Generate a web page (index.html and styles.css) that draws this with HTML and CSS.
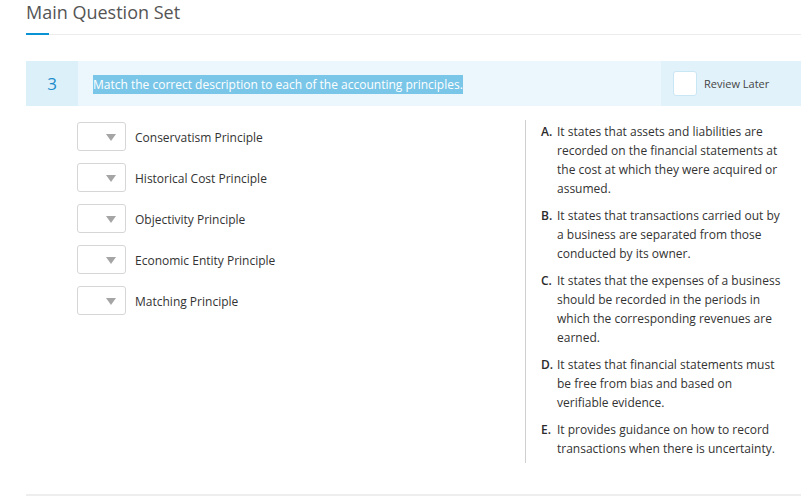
FILE: index.html
```html
<!DOCTYPE html>
<html lang="en">
<head>
    <meta charset="utf-8">
    <title>Main Question Set</title>
    <link rel="stylesheet" href="styles.css">
</head>
<body>
<div class="page">
    <div class="header">
        <h1 class="title">Main Question Set</h1>
        <div class="rule"><span class="rule-accent"></span></div>
    </div>

    <div class="question-bar">
        <div class="q-number">3</div>
        <div class="q-text"><span class="selected">Match the correct description to each of the accounting principles.</span></div>
        <label class="review">
            <span class="review-box"></span>
            <span class="review-label">Review Later</span>
        </label>
    </div>

    <div class="match">
        <div class="terms">
            <div class="term">
                <div class="dropdown"><span class="caret"></span></div>
                <span class="term-label">Conservatism Principle</span>
            </div>
            <div class="term">
                <div class="dropdown"><span class="caret"></span></div>
                <span class="term-label">Historical Cost Principle</span>
            </div>
            <div class="term">
                <div class="dropdown"><span class="caret"></span></div>
                <span class="term-label">Objectivity Principle</span>
            </div>
            <div class="term">
                <div class="dropdown"><span class="caret"></span></div>
                <span class="term-label">Economic Entity Principle</span>
            </div>
            <div class="term">
                <div class="dropdown"><span class="caret"></span></div>
                <span class="term-label">Matching Principle</span>
            </div>
        </div>

        <div class="options">
            <div class="option">
                <span class="letter">A.</span>
                <span class="desc">It states that assets and liabilities are recorded on the financial statements at the cost at which they were acquired or assumed.</span>
            </div>
            <div class="option">
                <span class="letter">B.</span>
                <span class="desc">It states that transactions carried out by a business are separated from those conducted by its owner.</span>
            </div>
            <div class="option">
                <span class="letter">C.</span>
                <span class="desc">It states that the expenses of a business should be recorded in the periods in which the corresponding revenues are earned.</span>
            </div>
            <div class="option">
                <span class="letter">D.</span>
                <span class="desc">It states that financial statements must be free from bias and based on verifiable evidence.</span>
            </div>
            <div class="option">
                <span class="letter">E.</span>
                <span class="desc">It provides guidance on how to record transactions when there is uncertainty.</span>
            </div>
        </div>
    </div>

    <div class="footer-rule"></div>
</div>
</body>
</html>
```

FILE: styles.css
```css
*{
    margin:0;
    padding:0;
    box-sizing:border-box;
}
body{
    font-family:'Open Sans', 'Noto Sans', sans-serif;
    color:#333;
    background:#fff;
}
.page{
    padding-left:26px;
}
.header .title{
    font-size:18px;
    font-weight:400;
    color:#555;
    line-height:24px;
    padding-top:0;
}
.header .rule{
    margin-top:10px;
    height:1px;
    background:#ececec;
    position:relative;
}
.header .rule-accent{
    position:absolute;
    left:0;
    top:-1px;
    width:23px;
    height:2px;
    background:#0a93d4;
}
.question-bar{
    margin-top:26px;
    height:45px;
    display:flex;
    align-items:center;
    background:#ecf7fd;
}
.q-number{
    width:52px;
    height:100%;
    display:flex;
    align-items:center;
    justify-content:center;
    background:#dcf0fa;
    color:#1a8ccc;
    font-size:17px;
}
.q-text{
    flex:1;
    padding-left:15px;
    padding-top:2px;
    font-size:12px;
}
.q-text .selected{
    background:#7ac6e8;
    color:#fff;
    line-height:19px;
    display:inline-block;
}
.review{
    width:140px;
    height:100%;
    display:flex;
    align-items:center;
    background:#e2f2fb;
    padding-left:12px;
}
.review-box{
    width:24px;
    height:25px;
    background:#fff;
    border:1px solid #c9e6f5;
    border-radius:3px;
}
.review-label{
    margin-left:7px;
    font-size:11px;
    color:#444;
}
.match{
    display:flex;
    margin-top:14px;
}
.terms{
    width:499px;
    padding-left:51px;
    padding-top:2px;
}
.term{
    display:flex;
    align-items:center;
    height:29px;
    margin-bottom:12px;
}
.dropdown{
    width:49px;
    height:29px;
    border:1px solid #d6d6d6;
    border-radius:3px;
    position:relative;
}
.caret{
    position:absolute;
    right:9px;
    top:11px;
    width:0;
    height:0;
    border-left:5px solid transparent;
    border-right:5px solid transparent;
    border-top:7px solid #a5a5a5;
}
.term-label{
    margin-left:9px;
    padding-top:2px;
    font-size:12px;
    color:#333;
}
.options{
    border-left:1px solid #cfcfcf;
    padding:2px 0 5px 15px;
    width:260px;
}
.option{
    display:flex;
    font-size:12px;
    line-height:19px;
    margin-bottom:8px;
}
.option:last-child{
    margin-bottom:0;
}
.option .letter{
    width:16px;
    flex:none;
    color:#2b2b2b;
    font-weight:600;
}
.option .desc{
    color:#333;
    width:226px;
}
.footer-rule{
    margin-top:31px;
    height:2px;
    background:#eee;
}
```
